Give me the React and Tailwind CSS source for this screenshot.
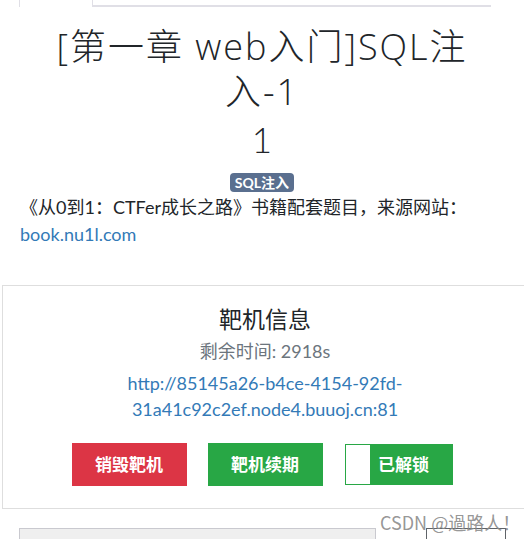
const body = { fontFamily: 'Lato, "Noto Sans CJK SC", sans-serif' };
const latin = { fontFamily: '"Open Sans", "Noto Sans CJK SC", sans-serif' };

const ChallengeHeader = () => (
  <div className="px-5 text-center">
    <h1 className="mt-[17px] text-[36px] leading-[44px] tracking-[2px] font-light text-[#212529]">
      <span style={latin}>[</span>第一章
      <span style={latin}> web</span>入门
      <span style={latin}>]SQL</span>注
      <br />
      入<span style={latin}>-1</span>
    </h1>
    <div className="mt-[5px] text-[35px] leading-[40px] font-light text-[#212529]">1</div>
    <div className="mt-[14px] flex justify-center">
      <span className="rounded-[4px] bg-[#5a6f8f] px-[5px] h-[19px] leading-[19px] text-[14px] font-bold text-white">
        SQL注入
      </span>
    </div>
    <p className="mt-[2px] text-left text-[18px] leading-[27px] text-[#212529]">
      《从0到1：CTFer成长之路》书籍配套题目，来源网站：
      <br />
      <a className="text-[#337ab7]" href="#">book.nu1l.com</a>
    </p>
  </div>
);

const TargetInfo = () => (
  <div className="mt-[37px] ml-[2px] mr-[-4px] h-[224px] border border-[#dedede] text-center">
    <h4 className="mt-[18px] text-[23px] leading-[30px] text-[#212529]">靶机信息</h4>
    <div className="mt-[5px] text-[18px] leading-[24px] text-[#6c757d]">剩余时间: 2918s</div>
    <div className="mt-[7px] text-[18px] leading-[26px] text-[#337ab7]">
      http://85145a26-b4ce-4154-92fd-
      <br />
      31a41c92c2ef.node4.buuoj.cn:81
    </div>
    <div className="mt-[21px] flex justify-center items-center gap-[21px] pr-[6px]">
      <button className="w-[115px] h-[43px] bg-[#dc3545] text-white text-[17px] font-bold">销毁靶机</button>
      <button className="w-[115px] h-[43px] bg-[#28a745] text-white text-[17px] font-bold">靶机续期</button>
      <div className="ml-[1px] w-[108px] h-[41px] border border-[#28a745] bg-[#28a745] flex">
        <div className="w-[24px] bg-white" />
        <span className="flex-1 flex items-center justify-center pr-[14px] text-white text-[17px] font-bold">已解锁</span>
      </div>
    </div>
  </div>
);

export default function App() {
  return (
    <div className="relative w-[524px] h-[539px] overflow-hidden bg-white" style={body}>
      <div className="flex">
        <div className="ml-[19px] w-[74px] h-[7px] border-x border-[#e0dfe6]" />
        <div className="w-[398px] h-[7px] border-b-2 border-[#e0dfe6]" />
      </div>
      <ChallengeHeader />
      <TargetInfo />
      <div className="mt-[19px] flex items-start">
        <div className="ml-[19px] w-[357px] h-[20px] bg-[#efefef] border border-[#c9c9cf]" />
        <div className="ml-[50px] w-[80px] h-[20px] border border-[#5f6368] bg-white" />
      </div>
      <div
        className="absolute left-[380px] top-[509px] text-[18px] text-[#8a8a8a]/90"
        style={{ fontFamily: '"Noto Sans CJK SC", sans-serif' }}
      >
        CSDN @過路人！
      </div>
    </div>
  );
}
